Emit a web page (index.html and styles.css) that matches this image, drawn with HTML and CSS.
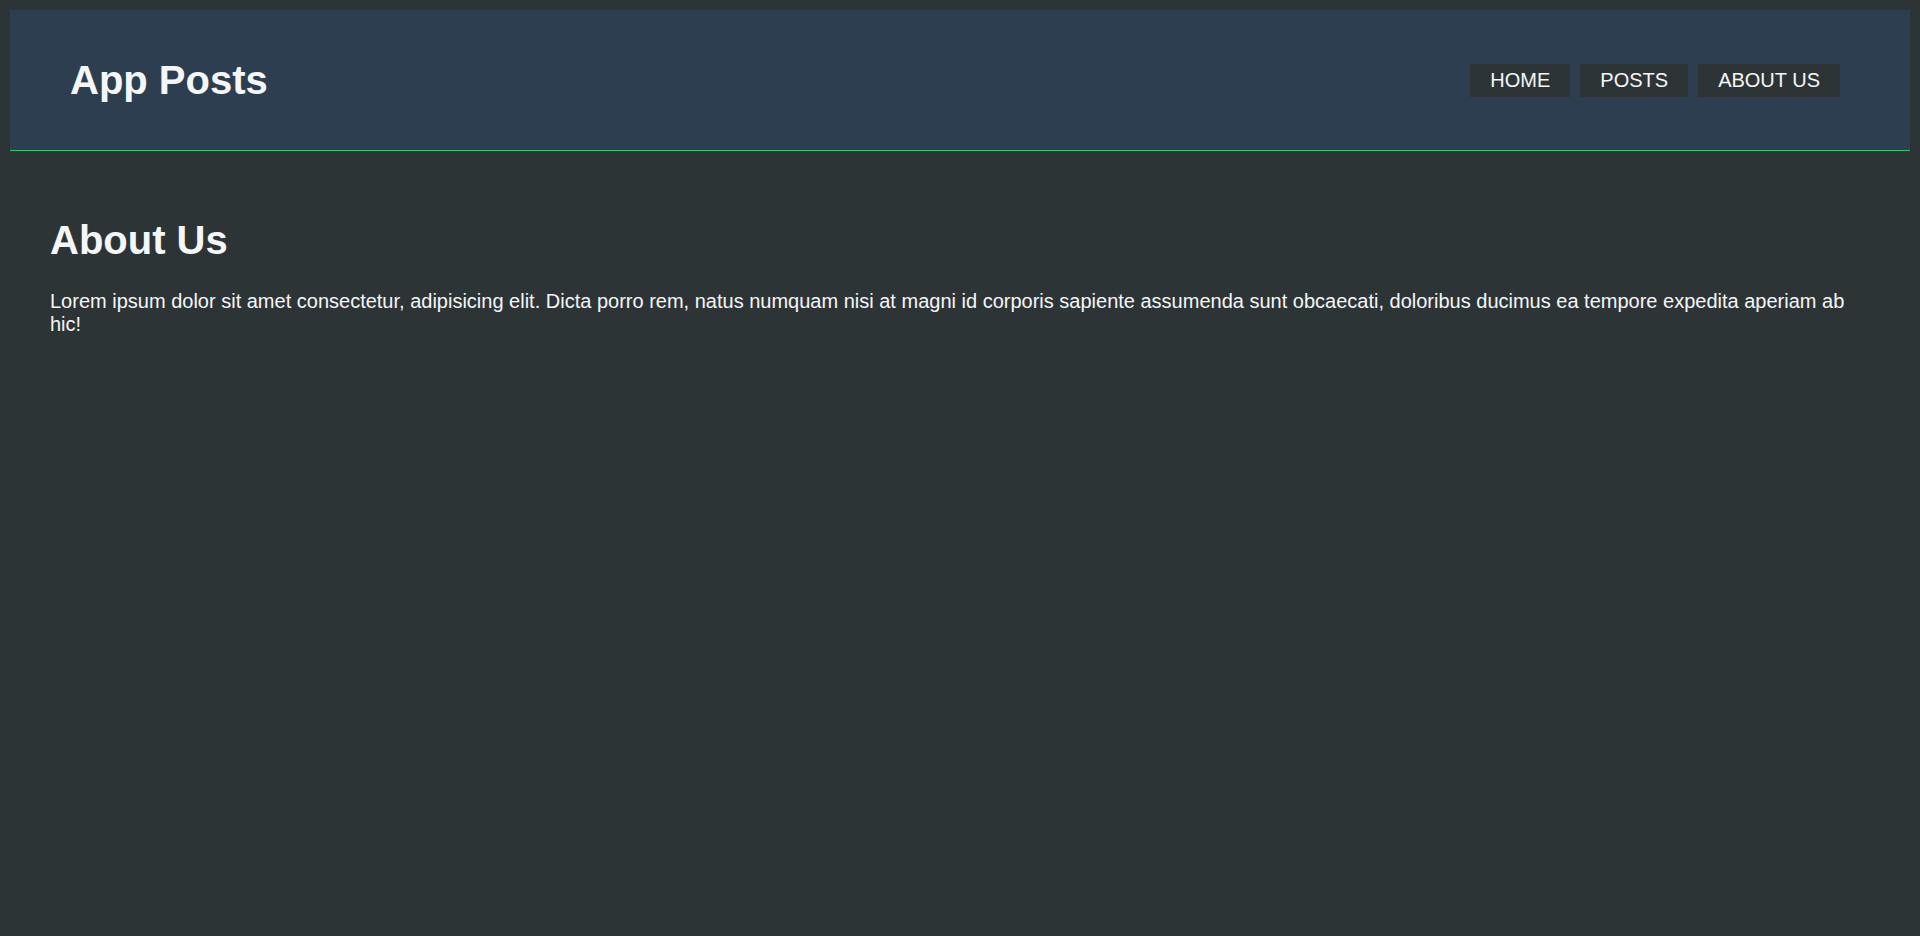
FILE: index.html
```html
<!DOCTYPE html>
<html lang="en">
<head>
<meta charset="utf-8">
<title>App Posts</title>
<link rel="stylesheet" href="styles.css">
</head>
<body>
<header class="site-header">
  <h1 class="brand">App Posts</h1>
  <nav class="nav">
    <a class="nav-link" href="#">HOME</a>
    <a class="nav-link" href="#">POSTS</a>
    <a class="nav-link" href="#">ABOUT US</a>
  </nav>
</header>
<main class="content">
  <h1 class="page-title">About Us</h1>
  <p class="page-text">Lorem ipsum dolor sit amet consectetur, adipisicing elit. Dicta porro rem, natus numquam nisi at magni id corporis sapiente assumenda sunt obcaecati, doloribus ducimus ea tempore expedita aperiam ab hic!</p>
</main>
</body>
</html>
```
FILE: styles.css
```css
html, body {
  background: #2d3436;
}
body {
  margin: 10px;
  font-family: "Liberation Sans", Arial, sans-serif;
  color: #f5f6f7;
}
.site-header {
  display: flex;
  justify-content: space-between;
  align-items: center;
  height: 140px;
  padding: 0 70px 0 60px;
  background: #2c3e50;
  border-bottom: 1px solid #2ecc71;
}
.brand {
  margin: 0;
  font-size: 40px;
  font-weight: bold;
}
.nav {
  display: flex;
  gap: 10px;
}
.nav-link {
  display: block;
  padding: 5px 20px;
  font-size: 20px;
  line-height: 23px;
  color: #f5f6f7;
  text-decoration: none;
  background: #2d3436;
}
.content {
  padding: 40px;
}
.page-title {
  font-size: 40px;
  margin: 0.67em 0;
}
.page-text {
  font-size: 20px;
  line-height: 23px;
  margin: 20px 0;
}
```
